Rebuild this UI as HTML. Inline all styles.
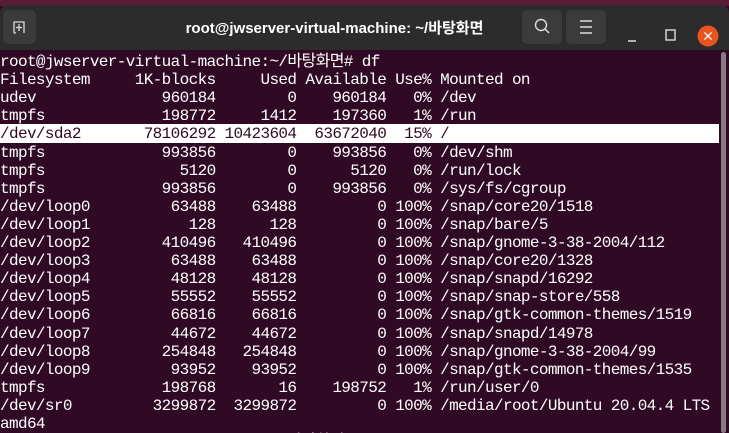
<!DOCTYPE html>
<html style="overflow:hidden;height:433px"><head><meta charset="utf-8"><style>
body{margin:0;width:729px;height:433px;overflow:hidden;background:#300a24;position:relative;font-family:"Liberation Sans","Noto Sans CJK KR",sans-serif}
.top{position:absolute;left:0;top:0;width:729px;height:6px;background:#5a1c35}
.bar{position:absolute;left:0;top:5px;width:729px;height:45px;background:#2c2c2c;border-radius:8px 8px 0 0}
.btn{position:absolute;top:10px;width:40px;height:34px;background:#3b3b3b;border-radius:5px}
.title{position:absolute;left:0;width:729px;top:17px;text-align:center;color:#fff;font-weight:bold;font-size:15px;padding-right:60px;box-sizing:border-box;white-space:nowrap}
.l{position:absolute;left:0;height:18px;margin:0;white-space:pre;font-family:"Liberation Mono","Noto Sans CJK KR",monospace;font-size:16px;line-height:18px;letter-spacing:-0.62px;color:#fff}
.hl{position:absolute;left:0;top:124px;width:719px;height:19px;background:#fff}
.sb{position:absolute;left:721px;top:52px;width:5px;height:381px;background:#8a7a84;border-radius:3px}
</style></head><body>
<div class="top"></div>
<div class="bar"></div>
<div class="btn" style="left:3px;width:33px"><svg width="33" height="34"><path d="M11 23V12h10v11M11 23h2M16 14v7M13 17.5h6" stroke="#ddd" stroke-width="1.3" fill="none"/></svg></div>
<div class="title">root@jwserver-virtual-machine: ~/바탕화면</div>
<div class="btn" style="left:522px"><svg width="40" height="34"><circle cx="19" cy="15" r="5.5" stroke="#ddd" stroke-width="1.4" fill="none"/><path d="M23 19l4 4" stroke="#ddd" stroke-width="1.5"/></svg></div>
<div class="btn" style="left:566px"><svg width="40" height="34"><path d="M14 11h12M14 17h12M14 23h12" stroke="#ddd" stroke-width="1.4"/></svg></div>
<svg style="position:absolute;left:620px;top:20px" width="100" height="34"><path d="M8 21h8" stroke="#ddd" stroke-width="1.5"/><rect x="46" y="10" width="9" height="10" stroke="#ddd" stroke-width="1.4" fill="none"/><circle cx="88" cy="16" r="10.5" fill="#e95420"/><path d="M84.5 12.5l7 7M91.5 12.5l-7 7" stroke="#fff" stroke-width="1.3"/></svg>
<div class="hl"></div>
<div class="sb"></div>
<div class="l" style="top:53px">root@jwserver-virtual-machine:~/바탕화면# df</div>
<div class="l" style="top:71.1px">Filesystem     1K-blocks     Used Available Use% Mounted on</div>
<div class="l" style="top:89.2px">udev              960184        0    960184   0% /dev</div>
<div class="l" style="top:107.3px">tmpfs             198772     1412    197360   1% /run</div>
<div class="l" style="top:125.4px;color:#300a24">/dev/sda2       78106292 10423604  63672040  15% /</div>
<div class="l" style="top:143.5px">tmpfs             993856        0    993856   0% /dev/shm</div>
<div class="l" style="top:161.6px">tmpfs               5120        0      5120   0% /run/lock</div>
<div class="l" style="top:179.7px">tmpfs             993856        0    993856   0% /sys/fs/cgroup</div>
<div class="l" style="top:197.8px">/dev/loop0         63488    63488         0 100% /snap/core20/1518</div>
<div class="l" style="top:215.9px">/dev/loop1           128      128         0 100% /snap/bare/5</div>
<div class="l" style="top:234px">/dev/loop2        410496   410496         0 100% /snap/gnome-3-38-2004/112</div>
<div class="l" style="top:252.1px">/dev/loop3         63488    63488         0 100% /snap/core20/1328</div>
<div class="l" style="top:270.2px">/dev/loop4         48128    48128         0 100% /snap/snapd/16292</div>
<div class="l" style="top:288.3px">/dev/loop5         55552    55552         0 100% /snap/snap-store/558</div>
<div class="l" style="top:306.4px">/dev/loop6         66816    66816         0 100% /snap/gtk-common-themes/1519</div>
<div class="l" style="top:324.5px">/dev/loop7         44672    44672         0 100% /snap/snapd/14978</div>
<div class="l" style="top:342.6px">/dev/loop8        254848   254848         0 100% /snap/gnome-3-38-2004/99</div>
<div class="l" style="top:360.7px">/dev/loop9         93952    93952         0 100% /snap/gtk-common-themes/1535</div>
<div class="l" style="top:378.8px">tmpfs             198768       16    198752   1% /run/user/0</div>
<div class="l" style="top:396.9px">/dev/sr0         3299872  3299872         0 100% /media/root/Ubuntu 20.04.4 LTS</div>
<div class="l" style="top:415px">amd64</div>
<div class="l" style="top:433px">                                바탕화면</div>
</body></html>
